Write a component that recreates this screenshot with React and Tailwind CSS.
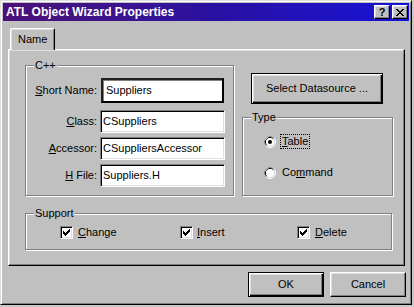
import React from "react";

// win95 bevels
const raised =
  "border border-t-white border-l-white border-r-black border-b-black shadow-[inset_-1px_-1px_0_#808080,inset_1px_1px_0_#dfdfdf]";
const defRaised =
  "border border-black shadow-[inset_1px_1px_0_#fff,inset_-1px_-1px_0_#000,inset_-2px_-2px_0_#808080,inset_2px_2px_0_#dfdfdf]";
const sunken =
  "border border-t-[#808080] border-l-[#808080] border-r-white border-b-white shadow-[inset_1px_1px_0_#000,inset_-1px_-1px_0_#dfdfdf]";
const etched = "border border-[#808080] shadow-[1px_1px_0_#fff,inset_1px_1px_0_#fff]";

function Group({ label, className, children }) {
  return (
    <div className={`${etched} ${className}`}>
      <div className="-mt-[7px] ml-[8px] w-fit bg-[#c0c0c0] px-[1px] leading-[13px]">{label}</div>
      {children}
    </div>
  );
}

function Field({ label, value, first }) {
  return (
    <div className={`flex items-center ${first ? "mt-[6px]" : ""}`}>
      <div className="w-[71px] text-right leading-[13px]">{label}</div>
      {first ? (
        <div className="ml-[4px] flex h-[25px] w-[123px] items-center border-2 border-black border-t-[#202020] border-l-[#202020] bg-white pl-[3px] shadow-[inset_1px_1px_0_#808080]">
          {value}
        </div>
      ) : (
        <div className={`ml-[3px] flex h-[23px] w-[125px] items-center bg-white pl-[2px] ${sunken}`}>{value}</div>
      )}
    </div>
  );
}

function Radio({ checked }) {
  return (
    <svg width="12" height="12" viewBox="0 0 12 12" className="shrink-0">
      <circle cx="6" cy="6" r="5.5" fill="none" stroke="#fff" />
      <path d="M9.89 2.11 A5.5 5.5 0 0 0 2.11 9.89" fill="none" stroke="#808080" />
      <circle cx="6" cy="6" r="4.5" fill="none" stroke="#dfdfdf" />
      <path d="M9.18 2.82 A4.5 4.5 0 0 0 2.82 9.18" fill="none" stroke="#000" />
      <circle cx="6" cy="6" r="4" fill="#fff" />
      {checked && <circle cx="6" cy="6" r="2" fill="#000" />}
    </svg>
  );
}

function Check() {
  return (
    <div className={`flex h-[13px] w-[13px] shrink-0 bg-white ${sunken}`}>
      <svg width="11" height="11" viewBox="1 1 11 11">
        <path
          d="M3 5h1v3h-1z M4 6h1v3h-1z M5 7h1v3h-1z M6 6h1v3h-1z M7 5h1v3h-1z M8 4h1v3h-1z M9 3h1v3h-1z"
          fill="#000"
        />
      </svg>
    </div>
  );
}

export default function App() {
  return (
    <div className="h-[307px] w-[414px] overflow-hidden bg-[#c8c8c8] font-['Liberation_Sans',Arial,sans-serif] text-[11px] text-black">
      <div className="flex h-[305px] w-[412px] flex-col border border-t-[#dfdfdf] border-l-[#dfdfdf] border-r-black border-b-black bg-[#c0c0c0] p-[2px] shadow-[inset_1px_1px_0_#fff,inset_-1px_-1px_0_#808080]">
        {/* title bar */}
        <div className="flex h-[18px] items-center bg-linear-to-r from-[#4c0f78] via-[#2a10a0] to-[#1212d8] pl-[3px] pr-[1px]">
          <span className="flex-1 text-[12px] font-bold leading-[18px] text-white">ATL Object Wizard Properties</span>
          <div className="flex gap-[2px]">
            <div className={`flex h-[14px] w-[16px] items-center justify-center bg-[#c0c0c0] text-[11px] font-bold leading-none ${raised}`}>
              ?
            </div>
            <div className={`flex h-[14px] w-[16px] items-center justify-center bg-[#c0c0c0] ${raised}`}>
              <svg width="8" height="7" viewBox="0 0 8 7">
                <path d="M0 0h2v1h-2z M6 0h2v1h-2z M1 1h2v1h-2z M5 1h2v1h-2z M2 2h4v1h-4z M3 3h2v1h-2z M2 4h4v1h-4z M1 5h2v1h-2z M5 5h2v1h-2z M0 6h2v1h-2z M6 6h2v1h-2z" fill="#000" />
              </svg>
            </div>
          </div>
        </div>

        {/* tab */}
        <div className="relative z-10 -mb-[1px] ml-[7px] mt-[7px] flex h-[22px] w-fit items-center rounded-t-[2px] border-l border-t border-l-white border-t-white bg-[#c0c0c0] px-[7px] pb-[1px] shadow-[inset_-1px_0_0_#808080,inset_1px_1px_0_#dfdfdf] border-r border-r-black">
          Name
        </div>

        {/* tab panel */}
        <div className="ml-[5px] flex h-[217px] w-[397px] flex-col border border-t-white border-l-white border-r-black border-b-black shadow-[inset_-1px_-1px_0_#808080,inset_1px_1px_0_#dfdfdf]">
          <div className="ml-[16px] mt-[15px] flex items-start">
            <Group label="C++" className="w-[209px] pb-[8px]">
              <Field first label={<><u>S</u>hort Name:</>} value="Suppliers" />
              <div className="mt-[7px]">
                <Field label={<><u>C</u>lass:</>} value="CSuppliers" />
              </div>
              <div className="mt-[4px]">
                <Field label={<><u>A</u>ccessor:</>} value="CSuppliersAccessor" />
              </div>
              <div className="mt-[4px]">
                <Field label={<><u>H</u> File:</>} value="Suppliers.H" />
              </div>
            </Group>

            <div className="ml-[8px] flex w-[151px] flex-col">
              <div className={`ml-[9px] mt-[8px] flex h-[31px] w-[132px] items-center justify-center bg-[#c0c0c0] ${defRaised}`}>
                Select Datasource ...
              </div>
              <Group label="Type" className="mt-[13px] h-[79px]">
                <div className="ml-[21px] mt-[9px] flex h-[17px] items-center gap-[4px]">
                  <Radio checked />
                  <span className="border border-dotted border-black px-[1px] leading-[13px]">
                    <u>T</u>able
                  </span>
                </div>
                <div className="ml-[21px] mt-[14px] flex h-[17px] items-center gap-[4px]">
                  <Radio />
                  <span className="border border-transparent px-[1px] leading-[13px]">
                    Co<u>m</u>mand
                  </span>
                </div>
              </Group>
            </div>
          </div>

          <Group label="Support" className="ml-[16px] mt-[17px] w-[367px] pb-[10px]">
            <div className="mt-[6px] flex pl-[34px]">
              <div className="flex w-[120px] items-center gap-[5px] leading-[13px]">
                <Check />
                <span><u>C</u>hange</span>
              </div>
              <div className="flex w-[117px] items-center gap-[4px] leading-[13px]">
                <Check />
                <span><u>I</u>nsert</span>
              </div>
              <div className="flex items-center gap-[5px] leading-[13px]">
                <Check />
                <span><u>D</u>elete</span>
              </div>
            </div>
          </Group>
        </div>

        {/* dialog buttons */}
        <div className="mt-[6px] flex justify-end gap-[6px] pr-[3px]">
          <div className={`flex h-[25px] w-[76px] items-center justify-center bg-[#c0c0c0] ${defRaised}`}>OK</div>
          <div className={`flex h-[25px] w-[76px] items-center justify-center bg-[#c0c0c0] ${raised}`}>Cancel</div>
        </div>
      </div>
    </div>
  );
}
